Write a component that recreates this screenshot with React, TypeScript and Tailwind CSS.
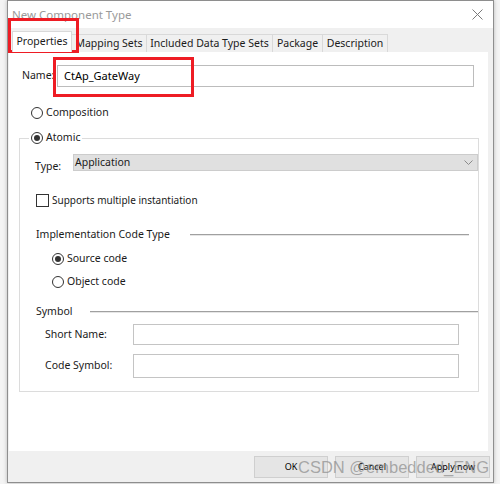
import React from "react";

const font = { fontFamily: '"Noto Sans", "Open Sans", sans-serif' };

function Radio({ checked }: { checked?: boolean }) {
  return (
    <span className="w-[12px] h-[12px] rounded-full border border-[#333333] bg-white flex items-center justify-center shrink-0">
      {checked && <span className="w-[6px] h-[6px] rounded-full bg-[#333333]" />}
    </span>
  );
}

function Tab({ label, w, active }: { label: string; w: string; active?: boolean }) {
  return active ? (
    <div className={`${w} h-[21px] bg-white border-t border-l border-r border-[#d9d9d9] flex items-center justify-center text-[#1a1a1a] relative z-10`}>
      {label}
    </div>
  ) : (
    <div className={`${w} h-[18px] bg-[#f0f0f0] border-t border-r border-[#d9d9d9] flex items-center justify-center text-[#1a1a1a]`}>
      {label}
    </div>
  );
}

export default function App() {
  return (
    <div
      className="w-[500px] h-[484px] bg-[#f4f4f4] relative overflow-hidden text-[10.5px] text-[#1a1a1a]"
      style={font}
    >
      <div className="ml-[7px] w-[487px] h-[483px] border border-[#8e8e8e] bg-[#f0f0f0] flex flex-col shadow-[0_0_4px_rgba(0,0,0,0.25)]">
        {/* Title bar */}
        <div className="h-[27px] bg-white flex items-center justify-between pl-[4px] pr-[10px] shrink-0">
          <span className="text-[11.5px] text-[#9a9a9a]">New Component Type</span>
          <svg width="11" height="11" viewBox="0 0 11 11" className="shrink-0">
            <path d="M0.5 0.5 L10.5 10.5 M10.5 0.5 L0.5 10.5" stroke="#7a7a7a" strokeWidth="1" />
          </svg>
        </div>

        {/* Tabs */}
        <div className="h-[24px] flex items-end pl-[4px] shrink-0">
          <Tab label="Properties" w="w-[60px]" active />
          <Tab label="Mapping Sets" w="w-[75px]" />
          <Tab label="Included Data Type Sets" w="w-[126px]" />
          <Tab label="Package" w="w-[50px]" />
          <Tab label="Description" w="w-[65px]" />
        </div>

        {/* Panel */}
        <div className="ml-[1px] w-[479px] h-[399px] bg-white shrink-0 flex flex-col">
          {/* Name row */}
          <div className="mt-[13px] h-[22px] flex items-center pl-[13px]">
            <span className="w-[35px]">Name:</span>
            <div className="w-[417px] h-[22px] border border-[#bcbcbc] flex items-center pl-[6px] text-[11px] text-black">
              CtAp_GateWay
            </div>
          </div>

          {/* Composition */}
          <div className="mt-[19px] h-[14px] flex items-center pl-[22px] gap-[3px]">
            <Radio />
            <span>Composition</span>
          </div>

          {/* Atomic group */}
          <div className="mt-[18px] ml-[10px] w-[460px] h-[254px] border border-[#dcdcdc] flex flex-col">
            <div className="-mt-[8px] h-[14px] flex pl-[9px]">
              <div className="bg-white px-[2px] flex items-center gap-[3px]">
                <Radio checked />
                <span>Atomic</span>
              </div>
            </div>

            {/* Type */}
            <div className="mt-[9px] h-[17px] flex items-start pl-[15px]">
              <span className="w-[38px] mt-[4px] leading-[17px]">Type:</span>
              <div className="w-[405px] h-[17px] bg-[#e0e0e0] border border-[#cccccc] flex items-center justify-between pl-[1px] pr-[4px]">
                <span>Application</span>
                <svg width="9" height="6" viewBox="0 0 9 6">
                  <path d="M0.5 0.5 L4.5 4.5 L8.5 0.5" stroke="#8a8a8a" strokeWidth="1" fill="none" />
                </svg>
              </div>
            </div>

            {/* Checkbox */}
            <div className="mt-[23px] h-[13px] flex items-center pl-[16px] gap-[3px]">
              <span className="w-[13px] h-[13px] border border-[#333333] bg-white shrink-0" />
              <span className="text-[10px]">Supports multiple instantiation</span>
            </div>

            {/* Implementation Code Type */}
            <div className="mt-[21px] h-[14px] flex items-center pl-[16px]">
              <span className="w-[154px]">Implementation Code Type</span>
              <div className="w-[279px] h-[2px] border-t border-[#a0a0a0] border-b border-b-[#e6e6e6]" />
            </div>

            <div className="mt-[10px] h-[13px] flex items-center pl-[32px] gap-[3px]">
              <Radio checked />
              <span>Source code</span>
            </div>
            <div className="mt-[10px] h-[13px] flex items-center pl-[32px] gap-[3px]">
              <Radio />
              <span>Object code</span>
            </div>

            {/* Symbol */}
            <div className="mt-[17px] h-[14px] flex items-center pl-[16px]">
              <span className="w-[54px]">Symbol</span>
              <div className="w-[388px] h-[2px] border-t border-[#a0a0a0] border-b border-b-[#e6e6e6]" />
            </div>

            <div className="mt-[5px] flex items-center pl-[25px]">
              <span className="w-[88px]">Short Name:</span>
              <div className="w-[326px] h-[21px] border border-[#c4c4c4] bg-white" />
            </div>
            <div className="mt-[9px] flex items-center pl-[25px]">
              <span className="w-[88px]">Code Symbol:</span>
              <div className="w-[326px] h-[24px] border border-[#c4c4c4] bg-white" />
            </div>
          </div>
        </div>

        {/* Bottom bar */}
        <div className="flex-1 flex justify-end items-start gap-[7px] pt-[5px] pr-[3px]">
          <div className="w-[74px] h-[22px] bg-[#e5e5e5] border border-[#cfcfcf] flex items-center justify-center text-[9px] text-black">OK</div>
          <div className="w-[74px] h-[22px] bg-[#e5e5e5] border border-[#cfcfcf] flex items-center justify-center text-[9px] text-black">Cancel</div>
          <div className="w-[74px] h-[22px] bg-[#e5e5e5] border border-[#cfcfcf] flex items-center justify-center text-[9px] text-black">Apply now</div>
        </div>
      </div>

      {/* Red highlight boxes */}
      <div className="absolute left-[8px] top-[18px] w-[71px] h-[35px] border-[3px] border-[#ee1c24]" />
      <div className="absolute left-[53px] top-[57px] w-[141px] h-[40px] border-[3px] border-[#ee1c24]" />

      {/* Watermark */}
      <div
        className="absolute left-[298px] top-[456px] text-[16.5px] leading-[22px] text-[#8a8a8a]/70 whitespace-nowrap"
        style={{ fontFamily: '"Liberation Sans", Arial, sans-serif' }}
      >
        CSDN @embedded_ENG
      </div>
    </div>
  );
}
